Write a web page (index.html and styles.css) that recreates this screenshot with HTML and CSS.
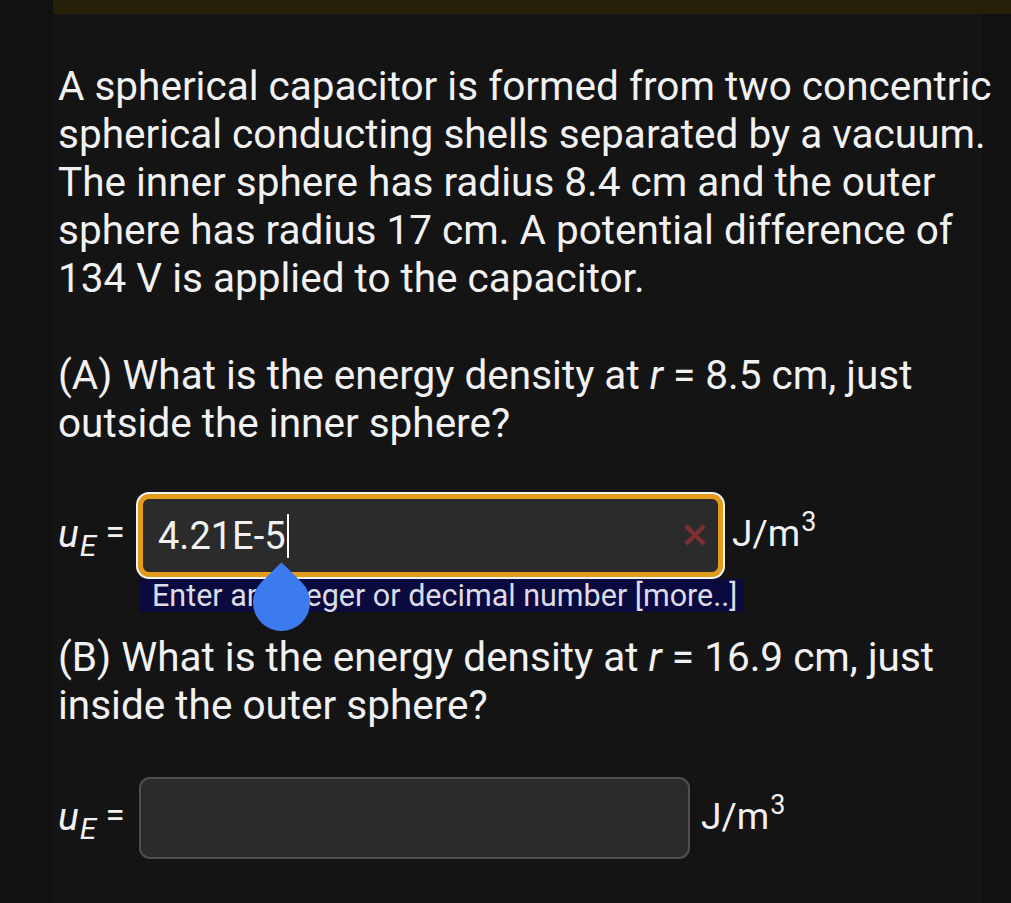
FILE: index.html
```html
<!DOCTYPE html>
<html>
<head>
<meta charset="utf-8">
<link rel="stylesheet" href="styles.css">
</head>
<body>
<div class="topbar"></div>
<div class="page">
  <div class="content">
    <p class="para">A spherical capacitor is formed from two concentric<br>spherical conducting shells separated by a vacuum.<br>The inner sphere has radius 8.4 cm and the outer<br>sphere has radius 17 cm. A potential difference of<br>134 V is applied to the capacitor.</p>

    <p class="para q-a">(A) What is the energy density at <i class="var">r</i> = 8.5 cm, just<br>outside the inner sphere?</p>

    <div class="answer-row row-a">
      <span class="lbl"><i class="u">u</i><i class="sub">E</i><span class="eq">=</span></span>
      <div class="field-wrap">
        <div class="field active">
          <span class="value">4.21E-5</span><span class="caret"></span>
          <svg class="clear" viewBox="0 0 22 22" width="22" height="22"><path d="M2 2 L20 20 M20 2 L2 20" stroke="#7e3030" stroke-width="4.5" stroke-linecap="butt"/></svg>
        </div>
        <div class="tip">Enter an integer or decimal number [more..]</div>
        <div class="handle"></div>
      </div>
      <span class="unit">J/m<sup>3</sup></span>
    </div>

    <p class="para q-b">(B) What is the energy density at <i class="var">r</i> = 16.9 cm, just<br>inside the outer sphere?</p>

    <div class="answer-row row-b">
      <span class="lbl"><i class="u">u</i><i class="sub">E</i><span class="eq">=</span></span>
      <div class="field empty"></div>
      <span class="unit">J/m<sup>3</sup></span>
    </div>
  </div>
</div>
</body>
</html>
```

FILE: styles.css
```css
html, body {
  margin: 0;
  padding: 0;
}
body {
  background: #111111;
  font-family: Roboto, "Noto Sans", sans-serif;
  color: #f1f1f1;
  width: 1011px;
  height: 903px;
  overflow: hidden;
}
.topbar {
  height: 14px;
  margin-left: 53px;
  background: #252007;
}
.page {
  margin-left: 53px;
  width: 929px;
  height: 889px;
  background: #141414;
}
.content {
  padding: 48px 0 0 5px;
}
.para {
  margin: 0;
  font-size: 40.5px;
  line-height: 48px;
  white-space: nowrap;
}
.q-a {
  margin-top: 49px;
}
.q-b {
  margin-top: 56px;
}
.var {
  font-style: italic;
}
.answer-row {
  display: flex;
  align-items: center;
}
.row-a {
  margin-top: 47px;
}
.row-b {
  margin-top: 48px;
}
.lbl {
  width: 80px;
  display: flex;
  align-items: baseline;
  font-size: 39px;
  line-height: 48px;
}
.u {
  font-style: italic;
}
.sub {
  font-style: italic;
  font-size: 30px;
  position: relative;
  top: 9px;
  margin-left: 1px;
}
.eq {
  font-size: 35px;
  margin-left: 9px;
  position: relative;
  top: -3px;
}
.field-wrap {
  position: relative;
}
.field {
  box-sizing: border-box;
  background: #2b2b2b;
  border-radius: 11px;
  display: flex;
  align-items: center;
}
.field.active {
  width: 585px;
  height: 83px;
  border: 5px solid #e39b1a;
  box-shadow: 0 0 0 2px #f4f4f4;
  padding: 0 12px 0 15px;
  font-size: 38px;
}
.value {
  line-height: 48px;
}
.caret {
  display: inline-block;
  width: 2px;
  height: 44px;
  background: #ffffff;
  margin-left: 1px;
}
.clear {
  margin-left: auto;
  margin-top: -2px;
}
.field.empty {
  width: 551px;
  height: 82px;
  border: 2px solid #4f4f4f;
  margin-left: 1px;
}
.tip {
  position: absolute;
  left: 1px;
  top: 85px;
  width: 605px;
  height: 33px;
  box-sizing: border-box;
  padding-left: 13px;
  background: #0a0a3e;
  color: #dcdce8;
  font-size: 30.5px;
  line-height: 33px;
  white-space: nowrap;
}
.handle {
  position: absolute;
  left: 115px;
  top: 80px;
  width: 57px;
  height: 57px;
  background: #3b7bee;
  border-radius: 0 50% 50% 50%;
  transform: rotate(45deg);
}
.unit {
  font-size: 37px;
  line-height: 48px;
  margin-left: 9px;
}
.row-b .unit {
  margin-left: 11px;
}
.unit sup {
  font-size: 27px;
  vertical-align: 0;
  position: relative;
  top: -15px;
  margin-left: 1px;
}
```
